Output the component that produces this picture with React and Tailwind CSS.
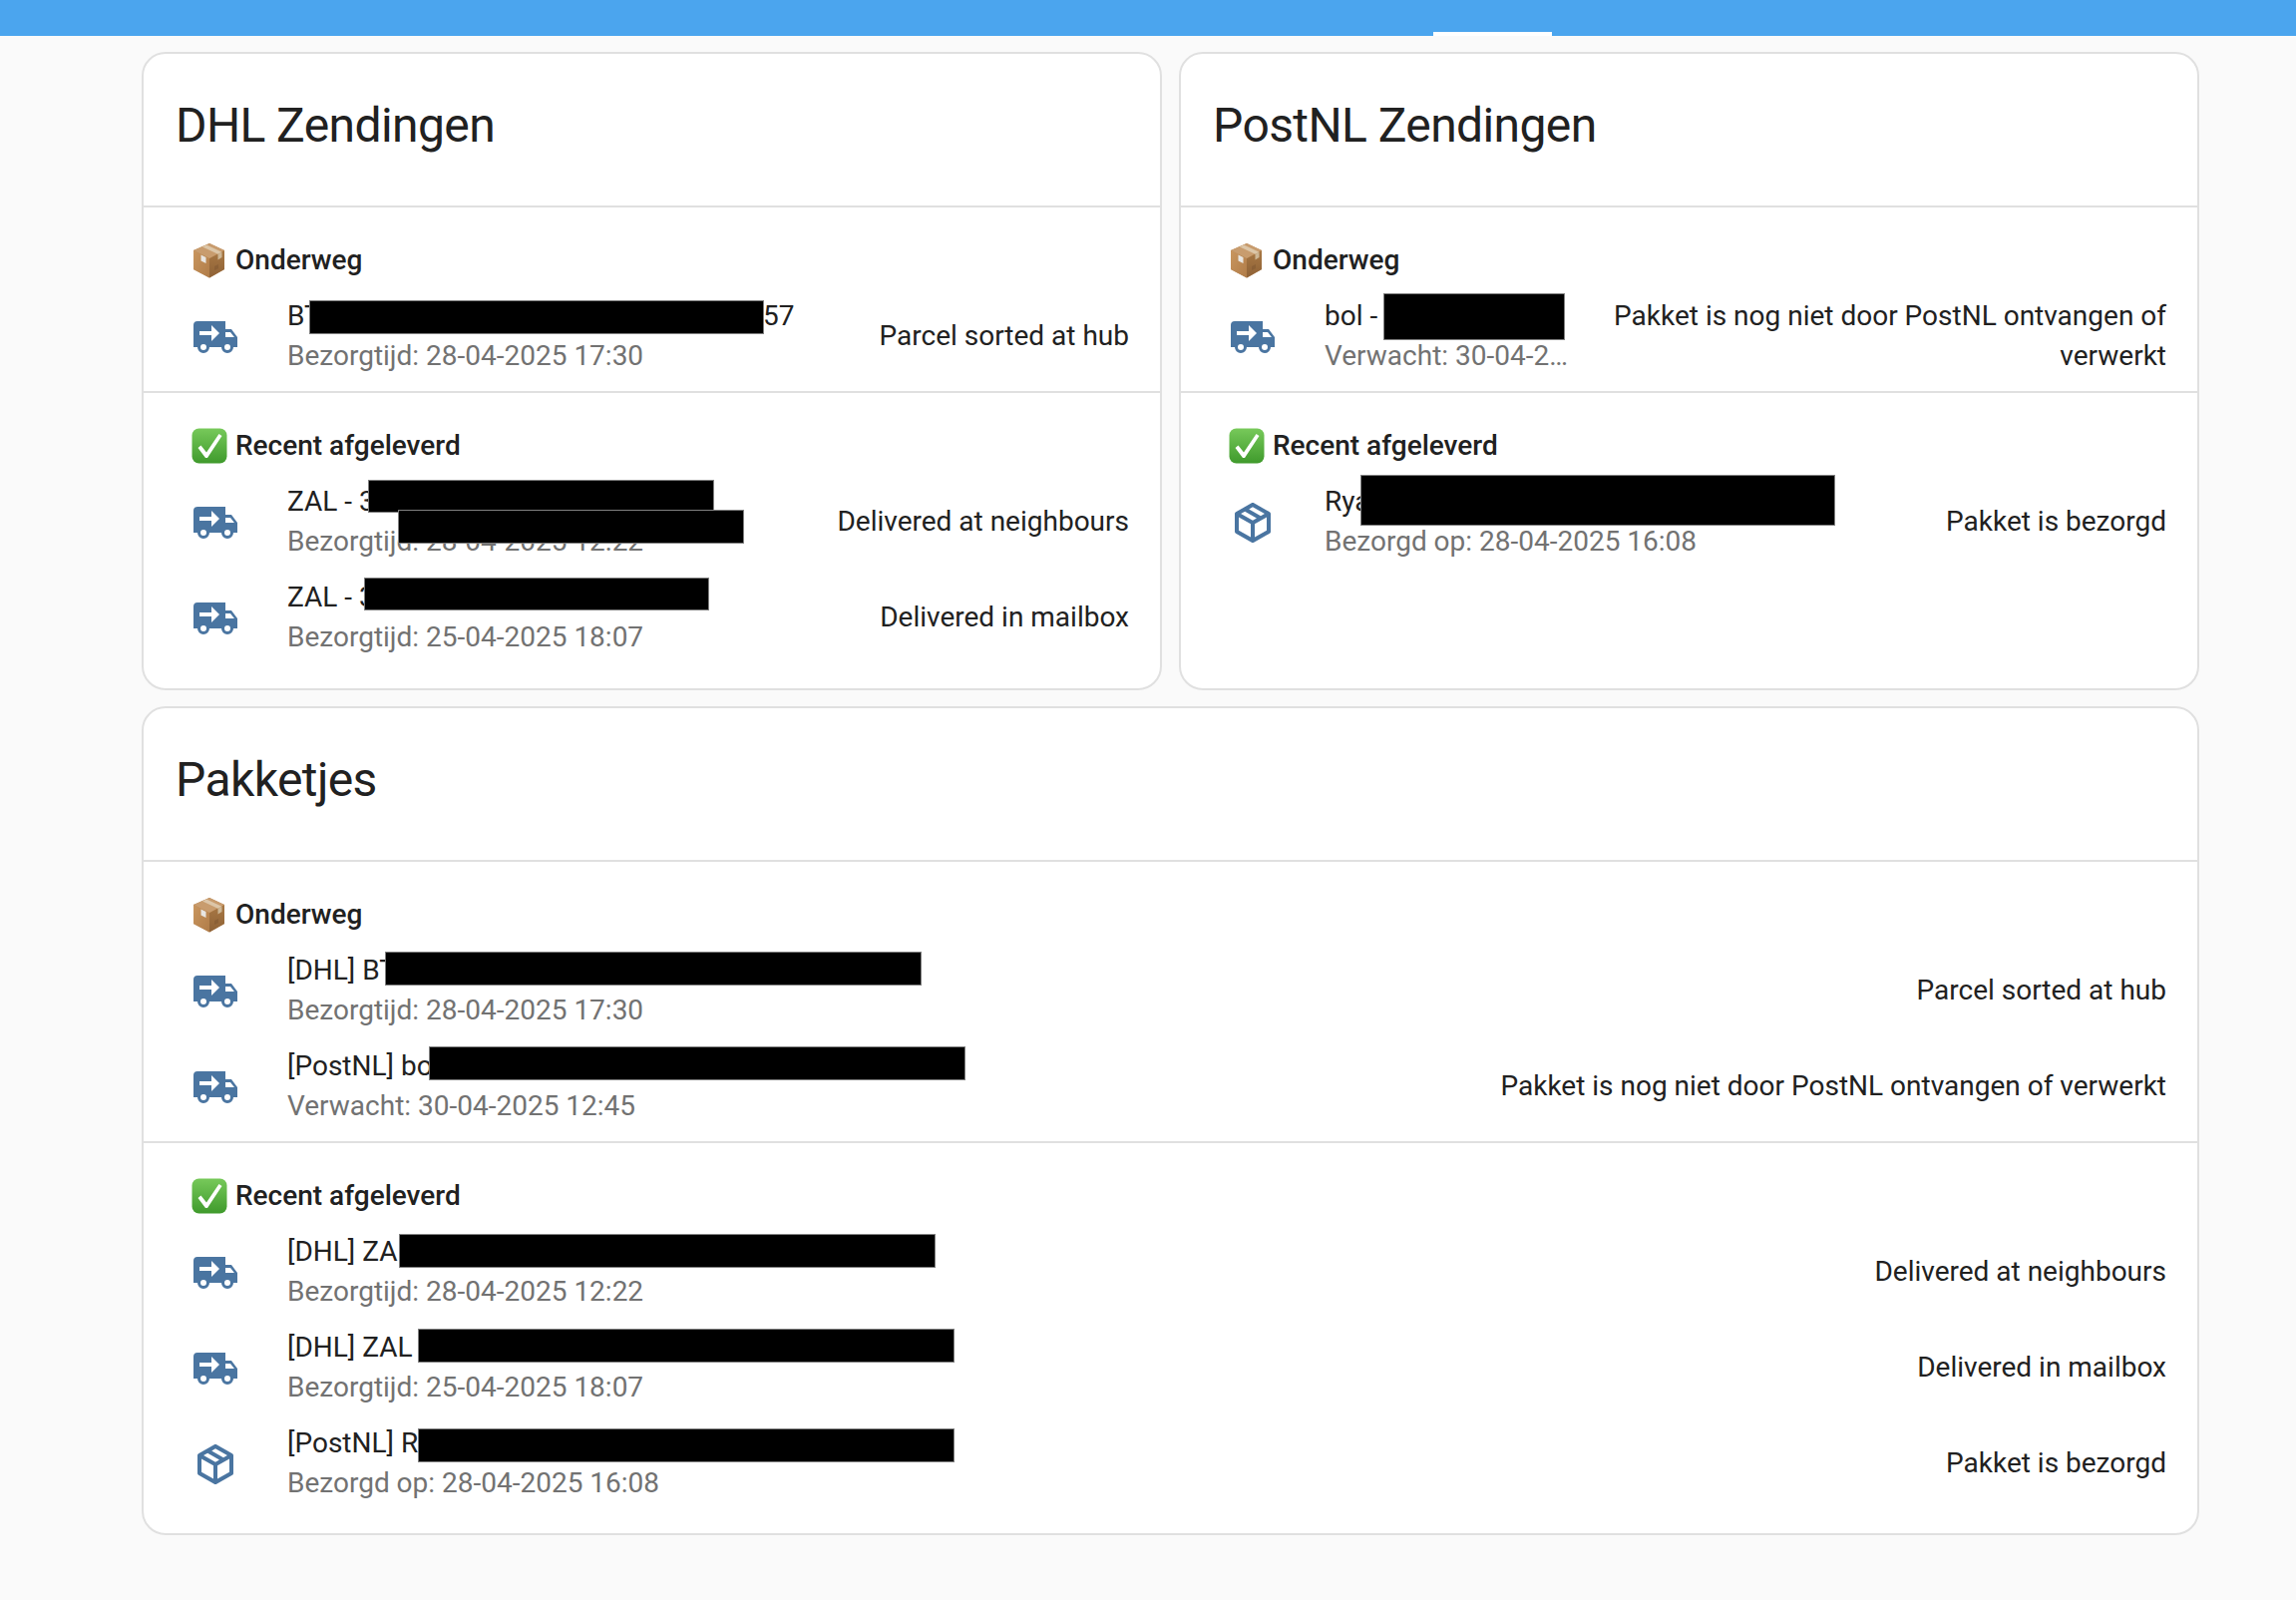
import React from "react";

const TRUCK = "M3 4A2 2 0 0 0 1 6V17H3A3 3 0 0 0 6 20A3 3 0 0 0 9 17H15A3 3 0 0 0 18 20A3 3 0 0 0 21 17H23V12L20 8H17V4M10 6L14 10L10 14V11H4V9H10M17 9.5H19.5L21.47 12H17M6 15.5A1.5 1.5 0 0 1 7.5 17A1.5 1.5 0 0 1 6 18.5A1.5 1.5 0 0 1 4.5 17A1.5 1.5 0 0 1 6 15.5M18 15.5A1.5 1.5 0 0 1 19.5 17A1.5 1.5 0 0 1 18 18.5A1.5 1.5 0 0 1 16.5 17A1.5 1.5 0 0 1 18 15.5Z";
const PACKAGE = "M21,16.5C21,16.88 20.79,17.21 20.47,17.38L12.57,21.82C12.41,21.94 12.21,22 12,22C11.79,22 11.59,21.94 11.43,21.82L3.53,17.38C3.21,17.21 3,16.88 3,16.5V7.5C3,7.12 3.21,6.79 3.53,6.62L11.43,2.18C11.59,2.06 11.79,2 12,2C12.21,2 12.41,2.06 12.57,2.18L20.47,6.62C20.79,6.79 21,7.12 21,7.5V16.5M12,4.15L10.11,5.22L16,8.61L17.96,7.5L12,4.15M6.04,7.5L12,10.85L13.96,9.75L8.08,6.35L6.04,7.5M5,15.91L11,19.29V12.58L5,9.21V15.91M19,15.91V9.21L13,12.58V19.29L19,15.91Z";

function BoxEmoji() {
  return (
    <svg viewBox="0 0 36 36" className="w-9 h-9 shrink-0">
      <defs>
        <linearGradient id="boxL" x1="0" y1="0" x2="1" y2="1">
          <stop offset="0" stopColor="#c9965f" />
          <stop offset="1" stopColor="#b07c48" />
        </linearGradient>
        <linearGradient id="boxR" x1="0" y1="0" x2="0" y2="1">
          <stop offset="0" stopColor="#a87844" />
          <stop offset="1" stopColor="#8f6236" />
        </linearGradient>
      </defs>
      <polygon points="18,1 33,8 33,27 18,35.5 2,27 2,8" fill="#b07c48" />
      <polygon points="2,8 18,16 18,35.5 2,27" fill="url(#boxL)" />
      <polygon points="33,8 18,16 18,35.5 33,27" fill="url(#boxR)" />
      <polygon points="18,1 33,8 18,16 2,8" fill="#c89c6e" />
      <polygon points="11,4.5 15,2.6 30.5,9.7 26.5,11.8" fill="#dcc6a8" />
      <polygon points="26.5,11.8 30.5,9.7 30.5,15 26.5,17.5" fill="#cdb796" />
      <polygon points="9.5,12.5 14.5,15 14.5,21 9.5,18.5" fill="#e8e6e2" />
      <polygon points="23,24 27,22 27,26 23,28" fill="#7d5630" opacity="0.5" />
    </svg>
  );
}

function CheckEmoji() {
  return (
    <svg viewBox="0 0 36 36" className="w-9 h-9 shrink-0">
      <defs>
        <linearGradient id="chk" x1="0" y1="0" x2="0" y2="1">
          <stop offset="0" stopColor="#77c95a" />
          <stop offset="1" stopColor="#3f9a2c" />
        </linearGradient>
      </defs>
      <rect x="0.5" y="0.5" width="35" height="35" rx="7" fill="url(#chk)" />
      <path d="M6.5 20 L9.5 17.5 L15 24.5 L27.5 6 L30.5 8 L16 30 L14 30 Z" fill="#ffffff" />
    </svg>
  );
}

function Redact({ className }) {
  return <span className={"absolute bg-black border border-[#808080] " + className} />;
}

function Row({ icon = "truck", primary, secondary, state, boxes = [], leftClass = "", after, stateClass = "" }) {
  return (
    <div className="flex items-center h-20">
      <div className="w-20 h-20 shrink-0 flex items-center justify-center pt-0.5">
        <svg viewBox="0 0 24 24" className="w-12 h-12" fill="#4a75a1">
          <path d={icon === "truck" ? TRUCK : PACKAGE} />
        </svg>
      </div>
      <div className={"relative ml-8 h-20 shrink-0 " + leftClass}>
        <div className="h-10 text-[28px] leading-10 text-[#212121] whitespace-nowrap">
          {primary}
          {after}
        </div>
        <div className="h-10 text-[28px] leading-10 text-[#727272] whitespace-nowrap truncate">{secondary}</div>
        {boxes.map((b) => (
          <Redact key={b} className={b} />
        ))}
      </div>
      <div className={"flex-1 text-right text-[28px] leading-10 text-[#212121] " + stateClass}>{state}</div>
    </div>
  );
}

function Section({ emoji, title, first, children, bottom = "pb-[15px]" }) {
  return (
    <div className={"pl-[32px] pr-[31px] pt-[33px] " + bottom + (first ? "" : " border-t-2 border-[#e0e0e0]")}>
      <div className="flex items-center gap-2 h-10 pl-4 mb-4 text-[28px] font-medium text-[#212121]">
        {emoji === "box" ? <BoxEmoji /> : <CheckEmoji />}
        <span>{title}</span>
      </div>
      <div className="flex flex-col gap-4">{children}</div>
    </div>
  );
}

function Card({ title, className = "", children }) {
  return (
    <div className={"bg-white border-2 border-[#e0e0e0] rounded-3xl " + className}>
      <div className="h-[152px] pt-10 pl-[32px] text-[48px] leading-[64px] tracking-[-0.6px] text-[#212121]">{title}</div>
      <div className="border-t-2 border-[#e0e0e0]">{children}</div>
    </div>
  );
}

export default function App() {
  return (
    <div className="min-h-[1604px] bg-[#fafafa] font-['Roboto',sans-serif]">
      <div className="relative h-9 bg-[#4ba5ee]">
        <div className="absolute left-[1437px] bottom-0 w-[119px] h-1 bg-white" />
      </div>
      <div className="ml-[142px] w-[2063px] pt-4 grid grid-cols-2 gap-x-[17px] gap-y-4">
        <Card title="DHL Zendingen">
          <Section emoji="box" title="Onderweg" first>
            <Row
              primary="BT"
              after={<span className="absolute left-[477px] top-0">57</span>}
              secondary="Bezorgtijd: 28-04-2025 17:30"
              state="Parcel sorted at hub"
              boxes={["left-[22px] top-1 w-[456px] h-[34px]"]}
            />
          </Section>
          <Section emoji="check" title="Recent afgeleverd" bottom="pb-[31px]">
            <Row
              primary="ZAL - 3"
              secondary="Bezorgtijd: 28-04-2025 12:22"
              state="Delivered at neighbours"
              boxes={["left-[81px] -top-0.5 w-[347px] h-[33px]", "left-[111px] top-[28px] w-[347px] h-[34px]"]}
            />
            <Row
              primary="ZAL - 3"
              secondary="Bezorgtijd: 25-04-2025 18:07"
              state="Delivered in mailbox"
              boxes={["left-[77px] top-0 w-[346px] h-[33px]"]}
            />
          </Section>
        </Card>

        <Card title="PostNL Zendingen">
          <Section emoji="box" title="Onderweg" first>
            <Row
              primary="bol - "
              secondary="Verwacht: 30-04-2025 12:45"
              state="Pakket is nog niet door PostNL ontvangen of verwerkt"
              leftClass="w-[244px]"
              stateClass="ml-[38px]"
              boxes={["left-[59px] -top-[3px] w-[182px] h-[47px]"]}
            />
          </Section>
          <Section emoji="check" title="Recent afgeleverd" bottom="pb-[31px]">
            <Row
              primary="Rya"
              secondary="Bezorgd op: 28-04-2025 16:08"
              state="Pakket is bezorgd"
              icon="package"
              boxes={["left-[36px] -top-[7px] w-[476px] h-[51px]"]}
            />
          </Section>
        </Card>

        <Card title="Pakketjes" className="col-span-2">
          <Section emoji="box" title="Onderweg" first>
            <Row
              primary="[DHL] BT"
              secondary="Bezorgtijd: 28-04-2025 17:30"
              state="Parcel sorted at hub"
              boxes={["left-[98px] top-px w-[538px] h-[34px]"]}
            />
            <Row
              primary="[PostNL] bol"
              secondary="Verwacht: 30-04-2025 12:45"
              state="Pakket is nog niet door PostNL ontvangen of verwerkt"
              boxes={["left-[142px] top-0 w-[538px] h-[34px]"]}
            />
          </Section>
          <Section emoji="check" title="Recent afgeleverd" bottom="pb-[30px]">
            <Row
              primary="[DHL] ZAL"
              secondary="Bezorgtijd: 28-04-2025 12:22"
              state="Delivered at neighbours"
              boxes={["left-[112px] top-0.5 w-[538px] h-[34px]"]}
            />
            <Row
              primary="[DHL] ZAL"
              secondary="Bezorgtijd: 25-04-2025 18:07"
              state="Delivered in mailbox"
              boxes={["left-[131px] top-px w-[538px] h-[34px]"]}
            />
            <Row
              primary="[PostNL] Ry"
              secondary="Bezorgd op: 28-04-2025 16:08"
              state="Pakket is bezorgd"
              icon="package"
              boxes={["left-[131px] top-[5px] w-[538px] h-[34px]"]}
            />
          </Section>
        </Card>
      </div>
    </div>
  );
}
